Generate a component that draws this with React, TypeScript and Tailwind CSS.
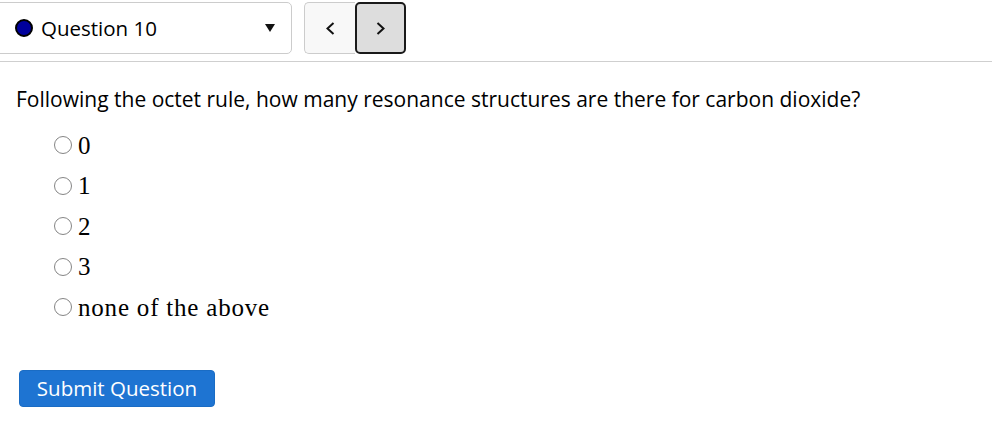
const options = ["0", "1", "2", "3", "none of the above"];

function Chevron({ dir }: { dir: "left" | "right" }) {
  return (
    <svg width="9" height="13" viewBox="0 0 9 13" fill="none">
      <polyline
        points={dir === "left" ? "7.5,1 1.5,6.5 7.5,12" : "1.5,1 7.5,6.5 1.5,12"}
        stroke="#111"
        strokeWidth="2"
      />
    </svg>
  );
}

export default function App() {
  return (
    <div className="w-[992px] h-[440px] overflow-hidden bg-white text-black font-['Open_Sans',sans-serif]">
      {/* Top bar */}
      <div className="h-[62px] flex items-start pt-[2px] border-b border-[#cfcfcf]">
        <div className="-ml-[6px] w-[298px] h-[52px] flex items-center border border-[#cccccc] rounded-[5px] bg-white pl-[20px] pr-[16px]">
          <span className="w-[18px] h-[18px] rounded-full bg-[#00009c] border-2 border-black" />
          <span className="ml-[8px] text-[20.5px] leading-none">Question 10</span>
          <svg className="ml-auto" width="10" height="8" viewBox="0 0 10 8">
            <polygon points="0,0 10,0 5,8" fill="#111" />
          </svg>
        </div>
        <div className="ml-[12px] flex h-[52px]">
          <button className="w-[51px] h-full flex items-center justify-center bg-[#f8f8f8] border border-[#cccccc] border-r-0 rounded-l-[5px]">
            <Chevron dir="left" />
          </button>
          <button className="w-[51px] h-full flex items-center justify-center bg-[#dddddd] border-2 border-[#1a1a1a] rounded-[5px]">
            <Chevron dir="right" />
          </button>
        </div>
      </div>

      {/* Question */}
      <p className="ml-[16px] mt-[24px] text-[21px] leading-[26px]">
        Following the octet rule, how many resonance structures are there for carbon dioxide?
      </p>

      <div className="mt-[13px] ml-[54px] flex flex-col">
        {options.map((o) => (
          <label key={o} className="h-[40.5px] flex items-center">
            <span className="w-[18px] h-[18px] rounded-full border border-[#858585] bg-white" />
            <span className="ml-[6px] font-['Liberation_Serif',serif] text-[25px] tracking-[0.8px] leading-none">
              {o}
            </span>
          </label>
        ))}
      </div>

      <button className="ml-[19px] mt-[42px] w-[196px] h-[37px] rounded-[4px] bg-[#1e74d2] border border-[#1a6cc4] text-white text-[20.5px] leading-none">
        Submit Question
      </button>
    </div>
  );
}
